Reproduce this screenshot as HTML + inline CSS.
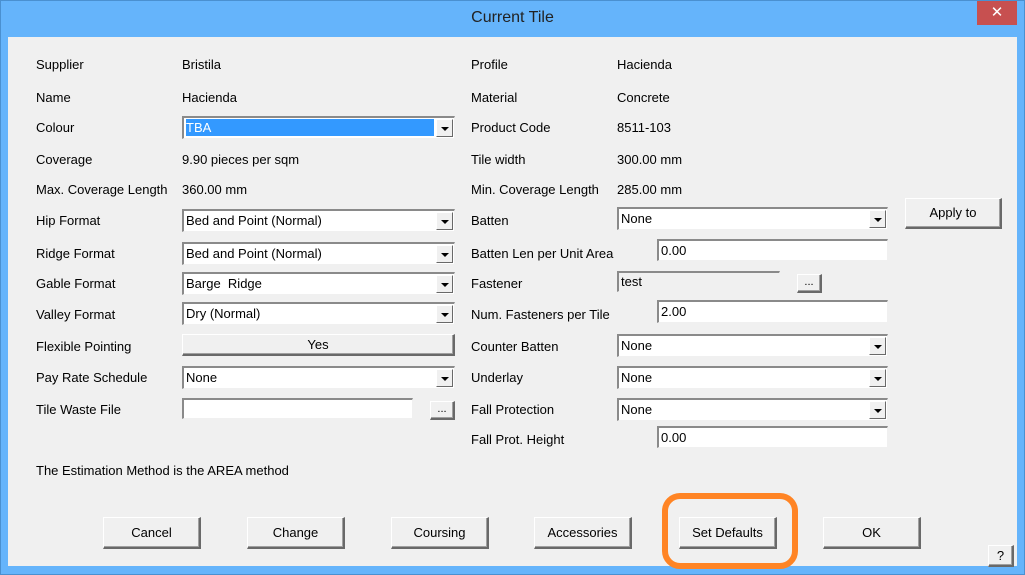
<!DOCTYPE html>
<html><head><style>
*{box-sizing:border-box;margin:0;padding:0}
body{width:1025px;height:575px;background:#65b4fb;position:relative;overflow:hidden;font-family:"Liberation Sans",sans-serif;font-size:13px;color:#000}
#outer{position:absolute;left:0;top:0;width:1025px;height:575px;border:1px solid #4a90d0}
.t{position:absolute;white-space:nowrap;line-height:16px}
#title{position:absolute;left:0;top:9px;width:1025px;text-align:center;font-size:16px;color:#222}
#close{position:absolute;left:977px;top:1px;width:40px;height:24px;background:#c75050;color:#fff;text-align:center;font-size:15px;line-height:24px}
#client{position:absolute;left:8px;top:37px;width:1009px;height:529px;background:#f0f0f0}
.sunk{position:absolute;background:#fff;border-top:2px solid #8a8a8a;border-left:2px solid #8a8a8a;border-bottom:1px solid #f0f0f0;border-right:1px solid #f0f0f0;padding-left:2px;line-height:19px;font-size:13px;white-space:nowrap}
.combo .arr{position:absolute;right:1px;top:1px;bottom:1px;width:17px;background:#f0f0f0;border-top:1px solid #fff;border-left:1px solid #fff;border-right:1px solid #696969;border-bottom:1px solid #696969}
.combo .arr:after{content:"";position:absolute;left:4px;top:7px;border-left:4px solid transparent;border-right:4px solid transparent;border-top:4px solid #000}
.btn{position:absolute;background:#f0f0f0;border-top:1px solid #fff;border-left:1px solid #fff;border-right:2px solid #696969;border-bottom:2px solid #696969;text-align:center;font-size:13px;box-shadow:inset -1px -1px 0 #a0a0a0}
</style></head><body>
<div id="outer"></div>
<div id="title">Current Tile</div>
<div id="close">✕</div>
<div id="client"></div>

<div class="t" style="left:36px;top:57px">Supplier</div><div class="t" style="left:182px;top:57px">Bristila</div>
<div class="t" style="left:36px;top:90px">Name</div><div class="t" style="left:182px;top:90px">Hacienda</div>
<div class="t" style="left:36px;top:120px">Colour</div>
<div class="t" style="left:36px;top:152px">Coverage</div><div class="t" style="left:182px;top:152px">9.90 pieces per sqm</div>
<div class="t" style="left:36px;top:182px">Max. Coverage Length</div><div class="t" style="left:182px;top:182px">360.00 mm</div>
<div class="t" style="left:36px;top:213px">Hip Format</div>
<div class="t" style="left:36px;top:246px">Ridge Format</div>
<div class="t" style="left:36px;top:276px">Gable Format</div>
<div class="t" style="left:36px;top:307px">Valley Format</div>
<div class="t" style="left:36px;top:339px">Flexible Pointing</div>
<div class="t" style="left:36px;top:370px">Pay Rate Schedule</div>
<div class="t" style="left:36px;top:402px">Tile Waste File</div>
<div class="t" style="left:36px;top:463px">The Estimation Method is the AREA method</div>

<div class="t" style="left:471px;top:57px">Profile</div><div class="t" style="left:617px;top:57px">Hacienda</div>
<div class="t" style="left:471px;top:90px">Material</div><div class="t" style="left:617px;top:90px">Concrete</div>
<div class="t" style="left:471px;top:120px">Product Code</div><div class="t" style="left:617px;top:120px">8511-103</div>
<div class="t" style="left:471px;top:152px">Tile width</div><div class="t" style="left:617px;top:152px">300.00 mm</div>
<div class="t" style="left:471px;top:182px">Min. Coverage Length</div><div class="t" style="left:617px;top:182px">285.00 mm</div>
<div class="t" style="left:471px;top:213px">Batten</div>
<div class="t" style="left:471px;top:246px">Batten Len per Unit Area</div>
<div class="t" style="left:471px;top:276px">Fastener</div>
<div class="t" style="left:471px;top:307px">Num. Fasteners per Tile</div>
<div class="t" style="left:471px;top:339px">Counter Batten</div>
<div class="t" style="left:471px;top:370px">Underlay</div>
<div class="t" style="left:471px;top:402px">Fall Protection</div>
<div class="t" style="left:471px;top:432px">Fall Prot. Height</div>

<div class="sunk combo" style="left:182px;top:116px;width:273px;height:23px"><span style="background:#3399ff;color:#fff;display:block;margin-right:20px;margin-top:1px;line-height:17px">TBA</span><div class="arr"></div></div>
<div class="sunk combo" style="left:182px;top:209px;width:273px;height:23px">Bed and Point (Normal)<div class="arr"></div></div>
<div class="sunk combo" style="left:182px;top:242px;width:273px;height:23px">Bed and Point (Normal)<div class="arr"></div></div>
<div class="sunk combo" style="left:182px;top:272px;width:273px;height:23px">Barge&nbsp; Ridge<div class="arr"></div></div>
<div class="sunk combo" style="left:182px;top:302px;width:273px;height:23px">Dry (Normal)<div class="arr"></div></div>
<div class="btn" style="left:182px;top:334px;width:273px;height:22px;line-height:19px">Yes</div>
<div class="sunk combo" style="left:182px;top:366px;width:273px;height:23px">None<div class="arr"></div></div>
<div class="sunk" style="left:182px;top:398px;width:231px;height:21px"></div>
<div class="btn" style="left:430px;top:401px;width:25px;height:19px;line-height:15px;font-size:11px">...</div>

<div class="sunk combo" style="left:617px;top:207px;width:271px;height:23px">None<div class="arr"></div></div>
<div class="sunk" style="left:657px;top:239px;width:231px;height:22px">0.00</div>
<div class="sunk" style="left:617px;top:271px;width:163px;height:21px;background:#f0f0f0;line-height:17px">test</div>
<div class="btn" style="left:797px;top:274px;width:25px;height:19px;line-height:15px;font-size:11px">...</div>
<div class="sunk" style="left:657px;top:300px;width:231px;height:23px">2.00</div>
<div class="sunk combo" style="left:617px;top:334px;width:271px;height:23px">None<div class="arr"></div></div>
<div class="sunk combo" style="left:617px;top:366px;width:271px;height:23px">None<div class="arr"></div></div>
<div class="sunk combo" style="left:617px;top:398px;width:271px;height:23px">None<div class="arr"></div></div>
<div class="sunk" style="left:657px;top:426px;width:231px;height:22px">0.00</div>

<div class="btn" style="left:905px;top:198px;width:97px;height:31px;line-height:28px">Apply to</div>

<div class="btn" style="left:103px;top:517px;width:98px;height:32px;line-height:29px">Cancel</div>
<div class="btn" style="left:247px;top:517px;width:98px;height:32px;line-height:29px">Change</div>
<div class="btn" style="left:391px;top:517px;width:98px;height:32px;line-height:29px">Coursing</div>
<div class="btn" style="left:534px;top:517px;width:98px;height:32px;line-height:29px">Accessories</div>
<div class="btn" style="left:679px;top:517px;width:98px;height:32px;line-height:29px">Set Defaults</div>
<div class="btn" style="left:823px;top:517px;width:98px;height:32px;line-height:29px">OK</div>
<div class="btn" style="left:988px;top:545px;width:26px;height:22px;line-height:19px">?</div>

<div style="position:absolute;left:662px;top:493px;width:136px;height:76px;border:6px solid #ff8424;border-radius:18px"></div>
</body></html>
